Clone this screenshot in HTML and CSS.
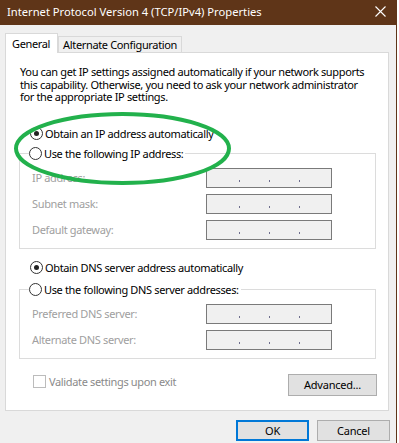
FILE: index.html
```html
<!DOCTYPE html>
<html lang="en">
<head>
<meta charset="UTF-8">
<title>Internet Protocol Version 4 (TCP/IPv4) Properties</title>
<link rel="stylesheet" href="styles.css">
</head>
<body>
<div class="window">
    <div class="titlebar">
        <span class="title">Internet Protocol Version 4 (TCP/IPv4) Properties</span>
        <svg class="close" width="11" height="11" viewBox="0 0 11 11">
            <path d="M0.5 0.5 L10.5 10.5 M10.5 0.5 L0.5 10.5" stroke="#fff" stroke-width="1.1" fill="none"/>
        </svg>
    </div>

    <div class="content">
        <div class="tabs">
            <div class="tab active">General</div>
            <div class="tab">Alternate Configuration</div>
        </div>

        <div class="panel">
            <p class="intro">You can get IP settings assigned automatically if your network supports<br>this capability. Otherwise, you need to ask your network administrator<br>for the appropriate IP settings.</p>

            <div class="radio-row first"><span class="radio checked"></span>Obtain an IP address automatically</div>
            <fieldset class="group">
                <legend class="radio-row"><span class="radio"></span>Use the following IP address:</legend>
                <div class="field"><span class="field-label">IP address:</span><span class="ip-box"><i></i><i></i><i></i></span></div>
                <div class="field"><span class="field-label">Subnet mask:</span><span class="ip-box"><i></i><i></i><i></i></span></div>
                <div class="field"><span class="field-label">Default gateway:</span><span class="ip-box"><i></i><i></i><i></i></span></div>
            </fieldset>

            <div class="radio-row dns"><span class="radio checked"></span>Obtain DNS server address automatically</div>
            <fieldset class="group">
                <legend class="radio-row"><span class="radio"></span>Use the following DNS server addresses:</legend>
                <div class="field"><span class="field-label">Preferred DNS server:</span><span class="ip-box"><i></i><i></i><i></i></span></div>
                <div class="field"><span class="field-label">Alternate DNS server:</span><span class="ip-box"><i></i><i></i><i></i></span></div>
            </fieldset>

            <div class="panel-footer">
                <div class="check"><span class="checkbox"></span>Validate settings upon exit</div>
                <button type="button" class="btn advanced">Advanced...</button>
            </div>
        </div>

        <div class="dialog-buttons">
            <button type="button" class="btn ok">OK</button>
            <button type="button" class="btn">Cancel</button>
        </div>
    </div>

    <!-- hand-drawn highlight around the IP radio buttons -->
    <svg class="highlight" width="260" height="200" viewBox="0 0 260 200">
        <ellipse cx="122.5" cy="148.5" rx="106.5" ry="34.5" fill="none" stroke="#22b14c" stroke-width="4"/>
    </svg>
</div>
</body>
</html>
```

FILE: styles.css
```css
body {
    margin: 0;
    padding: 0;
    background-color: #fff;
    font-family: "Noto Sans", Arial, sans-serif;
    font-size: 11px;
    letter-spacing: -0.35px;
    color: #000;
}

.window {
    position: relative;
    width: 396px;
    height: 443px;
    background-color: #f0f0f0;
    border-right: 1px solid #5f3518;
    overflow: hidden;
}

.titlebar {
    height: 25px;
    background-color: #5f3518;
    color: #fff;
    display: flex;
    align-items: center;
    justify-content: space-between;
    padding: 0 10px 2px 7px;
    box-sizing: border-box;
}

.title {
    font-size: 11.2px;
    letter-spacing: 0;
}

.close {
    display: block;
}

.content {
    padding: 8px 7px 0 5px;
}

.tabs {
    display: flex;
    align-items: flex-end;
    height: 19px;
}

.tab {
    height: 16px;
    line-height: 15px;
    padding: 0 4px 0 4px;
    border: 1px solid #d9d9d9;
    border-bottom: none;
    box-sizing: border-box;
    background-color: #f0f0f0;
}

.tab.active {
    height: 20px;
    margin-bottom: -1px;
    padding: 0 7px 0 6px;
    line-height: 19px;
    background-color: #fff;
    position: relative;
    z-index: 1;
}

.panel {
    background-color: #fff;
    border: 1px solid #d9d9d9;
    padding: 13px 11px 0 14px;
    height: 359px;
    box-sizing: border-box;
}

.intro {
    margin: 0;
    line-height: 12.5px;
    white-space: nowrap;
}

.radio-row {
    display: flex;
    align-items: center;
    height: 20px;
    margin-left: 10px;
    white-space: nowrap;
}

.radio-row.first {
    margin-top: 20px;
}

.radio-row.dns {
    margin-top: 9px;
    margin-bottom: 2px;
}

.radio {
    width: 13px;
    height: 13px;
    border: 1px solid #333;
    border-radius: 50%;
    box-sizing: border-box;
    margin-right: 2px;
    display: flex;
    align-items: center;
    justify-content: center;
    background-color: #fff;
}

.radio.checked::after {
    content: "";
    width: 5px;
    height: 5px;
    border-radius: 50%;
    background-color: #222;
}

.group {
    margin: 0 0 0 -1px;
    width: 357px;
    box-sizing: border-box;
    border: 1px solid #dcdcdc;
    padding: 4px 0 8px 12px;
}

.group legend.radio-row {
    margin-left: -3px;
    padding: 0 2px 0 0;
}

.field {
    display: grid;
    grid-template-columns: 174px 126px;
    align-items: center;
    height: 20px;
    margin-bottom: 6px;
}

.field:last-child {
    margin-bottom: 0;
}

.field-label {
    color: #a0a0a0;
}

.ip-box {
    height: 20px;
    border: 1px solid #7a7a7a;
    background-color: #f0f0f0;
    box-sizing: border-box;
    display: flex;
    align-items: flex-end;
    padding: 0 0 5px 32px;
    gap: 29px;
}

.ip-box i {
    width: 1px;
    height: 2px;
    background-color: #6e6e8e;
}

.panel-footer {
    display: flex;
    justify-content: space-between;
    align-items: flex-start;
    margin-top: 15px;
    padding-left: 13px;
}

.check {
    display: flex;
    align-items: center;
    margin-top: 1px;
    height: 13px;
    color: #8a8a8a;
}

.checkbox {
    width: 13px;
    height: 13px;
    border: 1px solid #bcbcbc;
    box-sizing: border-box;
    margin-right: 3px;
}

.btn {
    font-family: inherit;
    font-size: 11px;
    letter-spacing: -0.2px;
    color: #000;
    background-color: #e1e1e1;
    border: 1px solid #adadad;
    height: 22px;
    padding: 0;
    margin: 0;
}

.advanced {
    width: 89px;
}

.dialog-buttons {
    display: flex;
    justify-content: flex-end;
    gap: 8px;
    margin-top: 9px;
    margin-right: -1px;
}

.dialog-buttons .btn {
    width: 73px;
    height: 21px;
}

.btn.ok {
    border: 2px solid #0078d7;
}

.highlight {
    position: absolute;
    left: 0;
    top: 0;
    pointer-events: none;
}
```
